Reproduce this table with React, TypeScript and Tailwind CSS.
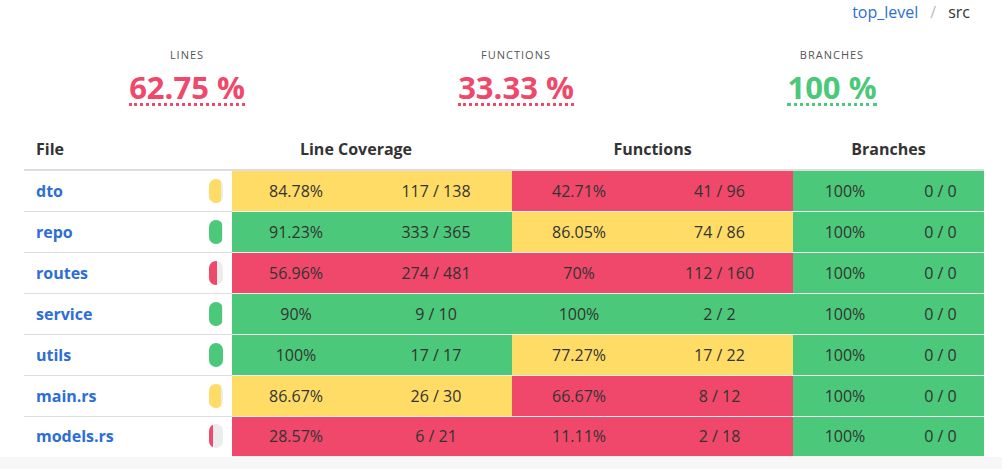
import React from "react";

type Row = {
  name: string;
  line: [string, string, number];
  fn: [string, string, number];
  br: [string, string, number];
};

const rows: Row[] = [
  { name: "dto", line: ["84.78%", "117 / 138", 84.78], fn: ["42.71%", "41 / 96", 42.71], br: ["100%", "0 / 0", 100] },
  { name: "repo", line: ["91.23%", "333 / 365", 91.23], fn: ["86.05%", "74 / 86", 86.05], br: ["100%", "0 / 0", 100] },
  { name: "routes", line: ["56.96%", "274 / 481", 56.96], fn: ["70%", "112 / 160", 70], br: ["100%", "0 / 0", 100] },
  { name: "service", line: ["90%", "9 / 10", 90], fn: ["100%", "2 / 2", 100], br: ["100%", "0 / 0", 100] },
  { name: "utils", line: ["100%", "17 / 17", 100], fn: ["77.27%", "17 / 22", 77.27], br: ["100%", "0 / 0", 100] },
  { name: "main.rs", line: ["86.67%", "26 / 30", 86.67], fn: ["66.67%", "8 / 12", 66.67], br: ["100%", "0 / 0", 100] },
  { name: "models.rs", line: ["28.57%", "6 / 21", 28.57], fn: ["11.11%", "2 / 18", 11.11], br: ["100%", "0 / 0", 100] },
];

// thresholds: >= 90 green, >= 75 yellow, else red
const tone = (p: number) => (p >= 90 ? "bg-[#4bc87a]" : p >= 75 ? "bg-[#ffdc66]" : "bg-[#f0486b]");

function Summary({ label, value, color, width }: { label: string; value: string; color: string; width: string }) {
  return (
    <div className={`flex flex-col items-center ${width}`}>
      <div className="text-[11px] leading-4 tracking-[1px] text-[#555]">{label}</div>
      <span className={`mt-[9px] inline-block border-b-[3px] border-dotted text-[31px] font-bold leading-none ${color}`}>
        {value}
      </span>
    </div>
  );
}

function Cells({ data }: { data: [string, string, number] }) {
  const bg = tone(data[2]);
  return (
    <>
      <td className={`${bg} border-b border-[#f0f0f0] text-center`}>{data[0]}</td>
      <td className={`${bg} border-b border-[#f0f0f0] text-center`}>{data[1]}</td>
    </>
  );
}

export default function App() {
  return (
    <div className="min-h-screen bg-[#f7f7f7] text-[#333]" style={{ fontFamily: '"Open Sans", "Noto Sans", sans-serif' }}>
      <div className="bg-white">
        {/* Breadcrumb */}
        <div className="flex h-6 items-center justify-end gap-3 pr-8 text-base">
          <span className="text-[#2d6ed6]">top_level</span>
          <span className="text-[#bbb]">/</span>
          <span>src</span>
        </div>

        {/* Totals */}
        <div className="mt-[23px] flex pl-[27px]">
          <Summary label="LINES" value="62.75 %" color="text-[#f0486b] border-[#f0486b]" width="w-[320px]" />
          <Summary label="FUNCTIONS" value="33.33 %" color="text-[#f0486b] border-[#f0486b]" width="w-[338px]" />
          <Summary label="BRANCHES" value="100 %" color="text-[#4bc87a] border-[#4bc87a]" width="w-[294px]" />
        </div>

        {/* Table */}
        <div className="mt-[23px] px-6 pr-[18px]">
          <table className="w-[960px] table-fixed border-collapse text-base">
            <colgroup>
              <col className="w-[176px]" />
              <col className="w-[32px]" />
              <col className="w-[128px]" />
              <col className="w-[152px]" />
              <col className="w-[134px]" />
              <col className="w-[147px]" />
              <col className="w-[104px]" />
              <col className="w-[87px]" />
            </colgroup>
            <thead>
              <tr className="h-[41px] border-b-2 border-[#ddd] font-bold">
                <th className="pl-3 text-left">File</th>
                <th colSpan={3} className="text-center">Line Coverage</th>
                <th colSpan={2} className="text-center">Functions</th>
                <th colSpan={2} className="text-center">Branches</th>
              </tr>
            </thead>
            <tbody>
              {rows.map((r, i) => {
                const last = i === rows.length - 1;
                return (
                  <tr key={r.name} className={last ? "h-[40px]" : "h-[41px]"}>
                    <td className={`pl-3 font-bold text-[#2d6ed6] ${last ? "" : "border-b border-[#ddd]"}`}>{r.name}</td>
                    <td className={last ? "" : "border-b border-[#ddd]"}>
                      <div className="mx-auto h-6 w-[14px] overflow-hidden rounded-full bg-[#ececec]">
                        <div className={`h-full ${tone(r.line[2])}`} style={{ width: `${r.line[2]}%` }} />
                      </div>
                    </td>
                    <Cells data={r.line} />
                    <Cells data={r.fn} />
                    <Cells data={r.br} />
                  </tr>
                );
              })}
            </tbody>
          </table>
        </div>
      </div>
    </div>
  );
}
